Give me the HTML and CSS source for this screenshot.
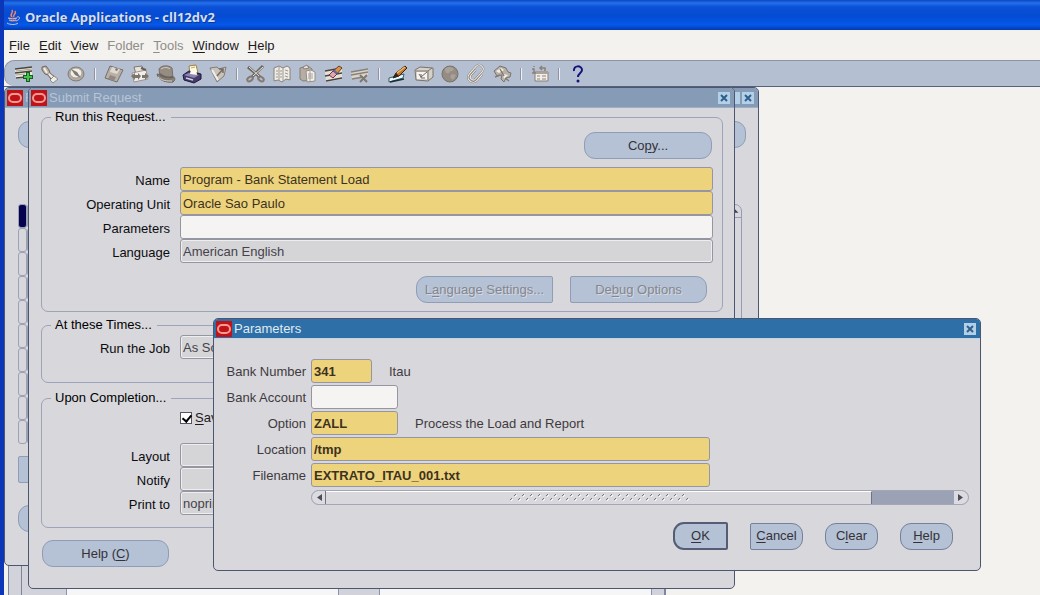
FILE: index.html
```html
<!DOCTYPE html>
<html lang="en">
<head>
  <meta charset="UTF-8">
  <title>Oracle Applications - cll12dv2</title>
  <link rel="stylesheet" href="styles.css">
</head>
<body>
  <svg class="defs" width="0" height="0" aria-hidden="true">
    <symbol id="oracle" viewBox="0 0 16 16">
      <rect width="16" height="16" fill="#c01318"/>
      <rect x="2" y="4" width="12" height="8" rx="4" fill="none" stroke="#f79a94" stroke-width="2"/>
    </symbol>
    <symbol id="close" viewBox="0 0 12 12">
      <path d="M3 3l6 6M9 3l-6 6" stroke="#2f5f8c" stroke-width="2"/>
    </symbol>
    <pattern id="ridges" width="8" height="8" patternUnits="userSpaceOnUse">
      <path d="M5 2l2-2M1 6l2-2" stroke="#74757e"/>
      <path d="M6 3l2-2M2 7l2-2" stroke="#fff"/>
    </pattern>
  </svg>

  <header class="titlebar">
    <svg class="java" width="15" height="16" viewBox="0 0 15 16" fill="none">
      <path d="M6 8C3 5 8 4 6 1M8 8c-2-2 3-3 1-6" stroke="#f0866e" stroke-width="1.5"/>
      <path d="M2 8h9l-1 5H4z" fill="#5a5a9c"/>
      <path d="M2 9c2 1 7 1 9 0M3 11c2 1 5 1 7 0M1 14c3 2 9 2 11 0" stroke="#c6c1da"/>
      <path d="M11 8c4-1 3 3-1 4" stroke="#c6c1da"/>
    </svg>
    <h1>Oracle Applications - cll12dv2</h1>
  </header>

  <nav class="menubar">
    <button><u>F</u>ile</button>
    <button><u>E</u>dit</button>
    <button><u>V</u>iew</button>
    <button disabled>Fo<u>l</u>der</button>
    <button disabled><u>T</u>ools</button>
    <button><u>W</u>indow</button>
    <button><u>H</u>elp</button>
  </nav>

  <div class="toolbar">
    <button aria-label="New"><svg viewBox="0 0 20 18"><path d="M1 4l17-2v10L2 14z" fill="#e9e7df"/><path d="M1 4l17-2M1 8l17-2M2 13l10-1" stroke="#4b463e" stroke-width="1.5"/><path d="M2 6l16-2M2 10l9-1" stroke="#aaa493"/><path d="M14 7v10M9 12h10" stroke="#145f20" stroke-width="4"/><path d="M14 8v8M10 12h8" stroke="#48bf4e" stroke-width="2"/></svg></button>
    <button aria-label="Find"><svg viewBox="0 0 20 18"><path d="M2 2l4-1 3 4 1 3 6 5-3 4-5-7-3-1-3-4z" fill="#b8b0a6" stroke="#6f675f"/><path d="M4 3l3 5M9 9l5 5" stroke="#efece4" stroke-width="2"/><path d="M14 11l4 3-5 4-3-3z" fill="#eeece6" stroke="#938b82"/></svg></button>
    <button aria-label="Show Navigator"><svg viewBox="0 0 20 18"><ellipse cx="10" cy="9" rx="8" ry="7" fill="#b3aca3" stroke="#827b73"/><ellipse cx="10" cy="8" rx="6" ry="5" fill="#f0eee8" stroke="#a39c94"/><path d="M5 4l6 3 4 6-6-3z" fill="#827a71"/></svg></button>
    <i class="sep"></i>
    <button aria-label="Save"><svg viewBox="0 0 20 18"><path d="M6 1l13 4-6 12L1 13z" fill="#b8b0a6" stroke="#756e67"/><path d="M8 2l8 2-3 5-7-2z" fill="#dedad2"/><path d="M6 10l6 2-2 4-6-2z" fill="#918981"/><path d="M12 3l2 1-1 2-2-1z" fill="#79716a"/></svg></button>
    <button aria-label="Next Step"><svg viewBox="0 0 20 18"><path d="M4 2l8-1 2 6-8 2z" fill="#e7e3db" stroke="#80786f"/><path d="M2 8l14-3 2 9-14 3z" fill="#f0eee9" stroke="#9a928a"/><path d="M1 11l4-3v2h3V8l3 3-3 4v-2H5v2z" fill="#7d756c"/><path d="M19 11l-4-3v2h-3v3h3v2z" fill="#7d756c"/><path d="M11 3l5 2" stroke="#676059" stroke-width="2"/></svg></button>
    <button aria-label="Switch Responsibility"><svg viewBox="0 0 20 18"><path d="M1 9c1 6 9 9 16 8 3-2 2-6-1-5z" fill="#8d847a" stroke="#6b635b"/><path d="M4 11L3 4c2-4 10-4 13-1l1 10c-5 3-9 1-13-2z" fill="#958c82" stroke="#786f66"/><path d="M4 9c4 4 8 4 13 3" stroke="#6b635b" stroke-width="2" fill="none"/><path d="M5 4c3-2 7-2 9 0M2 12c4 4 9 4 14 4" stroke="#d5cfc6" fill="none"/></svg></button>
    <button aria-label="Print"><svg viewBox="0 0 20 18"><path d="M7 1l7-1 2 8-8 1z" fill="#fffbe8" stroke="#9b8244"/><path d="M9 3l4-1M10 5l4-1" stroke="#c9a23f"/><path d="M1 10l6-4 12 3v5l-7 4L2 15z" fill="#453c6b" stroke="#1e1a36"/><path d="M2 10l5-2 10 2-5 3z" fill="#8b84b4"/><path d="M8 9l1-5 5-1 1 7z" fill="#fffbe8"/><path d="M4 13l7 2" stroke="#d3d0e8" stroke-width="1.5"/></svg></button>
    <button aria-label="Close Form"><svg viewBox="0 0 20 18"><path d="M2 3l7-1 2 2 7-2-2 9-7 6z" fill="#c9c3ba" stroke="#857d74"/><path d="M4 5l6 10" stroke="#f2f0eb" stroke-width="2"/><path d="M9 11l6-7M11 4h4v4" fill="none" stroke="#746c64" stroke-width="1.5"/></svg></button>
    <i class="sep"></i>
    <button aria-label="Cut"><svg viewBox="0 0 20 18"><path d="M2 2l12 10M17 1L6 12" stroke="#6c655e" stroke-width="3"/><path d="M3 2l10 9M17 2L7 11" stroke="#eae7e0"/><ellipse cx="4" cy="14" rx="3" ry="2" transform="rotate(-35 4 14)" fill="none" stroke="#837b72" stroke-width="2"/><ellipse cx="15" cy="14" rx="3" ry="2" transform="rotate(35 15 14)" fill="none" stroke="#837b72" stroke-width="2"/></svg></button>
    <button aria-label="Copy"><svg viewBox="0 0 20 18"><path d="M2 3l5-2 4 2 4-2 3 2v12l-4-1-4 3-4-2-4 1z" fill="#efede7" stroke="#8a8279"/><path d="M7 2v13M11 3v13M4 6h2M4 9h2M4 12h2M8 6h2M8 9h2M8 12h2M13 5l3 1M13 8l3 1M13 11l3 1" stroke="#9f978e"/></svg></button>
    <button aria-label="Paste"><svg viewBox="0 0 20 18"><path d="M2 3l8-2 4 3v11l-9 1-3-2z" fill="#b6aea4" stroke="#857c73"/><path d="M5 2l4-2 2 3-5 1z" fill="#e8e4dd" stroke="#898178"/><path d="M8 6l5-1 4 2v9l-8 1z" fill="#f3f1ed" stroke="#958d84"/><path d="M10 9h5M10 11h5M10 13h5M12 6v10" stroke="#aaa299"/></svg></button>
    <button aria-label="Clear Record"><svg viewBox="0 0 20 18"><path d="M1 6l17-3v11L2 17z" fill="#e5e2d9"/><path d="M1 6l17-3M1 11l17-3M2 16l16-3" stroke="#4a443d" stroke-width="1.5"/><path d="M8 7l7-6 3 2-6 7z" fill="#df9340" stroke="#643d26"/><path d="M5 10l4-4 4 3-4 4z" fill="#e8a3b1" stroke="#733242"/><path d="M9 6l2-1 3 3-2 1z" fill="#5a6ab0"/></svg></button>
    <button aria-label="Delete Record"><svg viewBox="0 0 20 18"><path d="M1 7l17-3v7L2 14z" fill="#d9d5cd"/><path d="M1 7l17-3M1 10l17-3M2 14l11-2" stroke="#8a8279" stroke-width="1.5"/><path d="M10 10l7 7M17 10l-7 7" stroke="#80776f" stroke-width="2"/></svg></button>
    <i class="sep"></i>
    <button aria-label="Edit Field"><svg viewBox="0 0 20 18"><path d="M1 13l15-4-1 4-14 4z" fill="#e8fafc" stroke="#325e69"/><path d="M2 17l14-3" stroke="#1d2b34" stroke-width="1.5"/><path d="M5 13l3-5 9-7 2 2-8 8z" fill="#c97626" stroke="#35241c"/><path d="M9 8l8-6" stroke="#f0bf62" stroke-width="1.5"/><path d="M5 13l3-5 3 3z" fill="#30241e"/></svg></button>
    <button aria-label="Zoom"><svg viewBox="0 0 20 18"><path d="M1 5l5-3 13 1v9l-5 4-12-1z" fill="#d6d1c9" stroke="#7a726a"/><path d="M2 6h12l4-3M14 6v9" stroke="#7a726a" fill="none"/><path d="M3 7h10v7H3z" fill="#f6f4f0"/><path d="M5 9l2 3 6-5M7 9v4h4" stroke="#6f675f" fill="none"/></svg></button>
    <button aria-label="Translations"><svg viewBox="0 0 20 18"><circle cx="10" cy="9" r="8" fill="#958d84" stroke="#7a7269"/><path d="M5 4c3-3 7-2 9 0-1 3-4 1-5 4-3 1-4-1-4-4zM12 9l4 1-3 5-3-3z" fill="#aaa298"/></svg></button>
    <button aria-label="Attachments"><svg viewBox="0 0 20 18" fill="none"><g transform="rotate(42 10 9)"><path d="M7 6v7c0 4 6 4 6 0V3c0-5-8-5-8 0v10c0 7 10 7 10 0V5" stroke="#857d74" stroke-width="2"/><path d="M7 6v7c0 4 6 4 6 0V3c0-5-8-5-8 0v10c0 7 10 7 10 0V5" stroke="#f2f0eb"/></g></svg></button>
    <button aria-label="Folder Tools"><svg viewBox="0 0 20 18"><path d="M2 6l6-5 6 2 2 4 3 1-1 4-4 1-2 4-3-3 1-4-5 1z" fill="#b8b0a6" stroke="#7c746b"/><path d="M4 6l5-3 3 2-5 3zM11 9l5 1-4 4z" fill="#f1eee8"/><path d="M8 4l4 7M3 12l5-2M13 13l4 3" stroke="#857d74" stroke-width="1.5"/></svg></button>
    <i class="sep"></i>
    <button aria-label="Window Help"><svg viewBox="0 0 20 18"><path d="M5 7h13v9H5z" fill="#f2efe8" stroke="#887f76"/><path d="M5 8h13" stroke="#aaa298" stroke-width="2"/><path d="M7 11h3M7 14h3M12 11h4M12 14h4" stroke="#8a8178"/><path d="M4 1v1M2 4h2v4M2 8h4M15 6V3h-5M12 1l-2 2 2 2" fill="none" stroke="#8a8178" stroke-width="1.5"/></svg></button>
    <i class="sep"></i>
    <button aria-label="Help"><svg viewBox="0 0 20 18"><path d="M6 6C5 0 14 0 14 5c0 3-4 3-4 7" fill="none" stroke="#17127a" stroke-width="2"/><circle cx="10" cy="16" r="1.5" fill="#17127a"/></svg></button>
  </div>

  <main class="desktop">
    <div class="navigator">
      <div class="gutter"></div>
      <div class="pane"></div>
      <div class="pane"></div>
      <div class="gutter"></div>
    </div>

    <section class="window requests">
      <div class="window-title">
        <svg class="logo"><use href="#oracle"/></svg>
        <h2>Requests</h2>
        <button class="close" aria-label="Restore"></button>
        <button class="close" aria-label="Close"><svg><use href="#close"/></svg></button>
      </div>
      <div class="requests-body">
        <button class="btn wide" aria-label="Refresh Data"></button>
        <div class="records">
          <div class="rows">
            <div class="row current"><i></i><b></b></div>
            <div class="row"><i></i><b></b></div>
            <div class="row"><i></i><b></b></div>
            <div class="row"><i></i><b></b></div>
            <div class="row"><i></i><b></b></div>
            <div class="row"><i></i><b></b></div>
            <div class="row"><i></i><b></b></div>
            <div class="row"><i></i><b></b></div>
            <div class="row"><i></i><b></b></div>
            <div class="row"><i></i><b></b></div>
          </div>
          <div class="vscroll"><svg viewBox="0 0 14 14"><path d="M3 9l4-4 4 4z" fill="#3b4050"/></svg></div>
        </div>
        <button class="btn square-left" aria-label="Hold Request"></button>
        <button class="btn" aria-label="Cancel Request"></button>
      </div>
    </section>

    <section class="window submit">
      <div class="window-title">
        <svg class="logo"><use href="#oracle"/></svg>
        <h2>Submit Request</h2>
        <button class="close" aria-label="Close"><svg><use href="#close"/></svg></button>
      </div>
      <form class="submit-form">
        <fieldset class="run">
          <legend>Run this Request...</legend>
          <div class="buttons copy"><button type="button" class="btn">Co<u>p</u>y...</button></div>
          <div class="fields">
            <label for="name">Name</label>
            <input id="name" class="required" value="Program - Bank Statement Load">
            <label for="unit">Operating Unit</label>
            <input id="unit" class="required" value="Oracle Sao Paulo">
            <label for="params">Parameters</label>
            <input id="params">
            <label for="language">Language</label>
            <input id="language" class="locked" value="American English" readonly>
          </div>
          <div class="buttons settings">
            <button type="button" class="btn square-right" disabled>L<u>a</u>nguage Settings...</button>
            <button type="button" class="btn square-left" disabled>De<u>b</u>ug Options</button>
          </div>
        </fieldset>

        <fieldset class="times">
          <legend>At these Times...</legend>
          <div class="fields">
            <label for="job">Run the Job</label>
            <input id="job" class="locked" value="As Soon as Possible" readonly>
          </div>
        </fieldset>

        <fieldset class="completion">
          <legend>Upon Completion...</legend>
          <div class="save">
            <input type="checkbox" id="save" checked>
            <label for="save"><u>S</u>ave all Output Files</label>
          </div>
          <div class="fields">
            <label for="layout">Layout</label>
            <input id="layout" class="locked" readonly>
            <label for="notify">Notify</label>
            <input id="notify" class="locked" readonly>
            <label for="print">Print to</label>
            <input id="print" class="locked" value="noprint" readonly>
          </div>
        </fieldset>

        <button type="button" class="btn help">Help (<u>C</u>)</button>
      </form>
    </section>

    <section class="window active parameters">
      <div class="window-title">
        <svg class="logo"><use href="#oracle"/></svg>
        <h2>Parameters</h2>
        <button class="close" aria-label="Close"><svg><use href="#close"/></svg></button>
      </div>
      <form class="params-form">
        <div class="param">
          <label for="bank">Bank Number</label>
          <input id="bank" class="required short" value="341">
          <span>Itau</span>
        </div>
        <div class="param">
          <label for="account">Bank Account</label>
          <input id="account" class="medium">
        </div>
        <div class="param">
          <label for="option">Option</label>
          <input id="option" class="required medium" value="ZALL">
          <span>Process the Load and Report</span>
        </div>
        <div class="param">
          <label for="location">Location</label>
          <input id="location" class="required long" value="/tmp">
        </div>
        <div class="param">
          <label for="filename">Filename</label>
          <input id="filename" class="required long" value="EXTRATO_ITAU_001.txt">
        </div>
        <div class="hscroll">
          <button type="button" class="arrow left" aria-label="Scroll left"><svg viewBox="0 0 14 13"><path d="M10 3v7L5 6.5z" fill="#4d4d58"/></svg></button>
          <div class="thumb"><svg class="grip"><rect width="180" height="8" fill="url(#ridges)"/></svg></div>
          <div class="trough"></div>
          <button type="button" class="arrow" aria-label="Scroll right"><svg viewBox="0 0 14 13"><path d="M4 3v7l5-3.5z" fill="#4d4d58"/></svg></button>
        </div>
        <div class="actions">
          <button type="button" class="btn square-right default"><u>O</u>K</button>
          <button type="button" class="btn square-left"><u>C</u>ancel</button>
          <button type="button" class="btn">C<u>l</u>ear</button>
          <button type="button" class="btn"><u>H</u>elp</button>
        </div>
      </form>
    </section>
  </main>
</body>
</html>
```

FILE: styles.css
```css
* {
  box-sizing: border-box;
}

body {
  margin: 0;
  height: 100vh;
  display: flex;
  flex-direction: column;
  overflow: hidden;
  border-left: 4px solid #0c36b8;
  background: #f3f2ef;
  font-family: "Liberation Sans", Arial, sans-serif;
  font-size: 13px;
  line-height: 16px;
  color: #1c1a1c;
}

button,
input {
  font: inherit;
  color: inherit;
}

button {
  padding: 0;
  border: 0;
  background: none;
}

h1,
h2 {
  margin: 0;
}

u {
  text-decoration-thickness: 1px;
  text-underline-offset: 2px;
}

.defs {
  position: absolute;
}

.titlebar {
  display: flex;
  align-items: center;
  gap: 4px;
  height: 30px;
  flex: none;
  margin-left: -4px;
  padding: 4px 0 0 6px;
  background: linear-gradient(#0a47c0 0, #2470ea 3px, #0a50d8 7px, #044cd2 16px, #0558ea 25px, #0339b0 30px);
}

.titlebar h1 {
  font: bold 13px/18px "Open Sans", sans-serif;
  color: #d3dff5;
  text-shadow: 1px 1px 0 #123a8c;
}

.menubar {
  display: flex;
  gap: 9px;
  height: 30px;
  flex: none;
  padding: 2px 5px 0;
}

.menubar button:disabled {
  color: #908c88;
}

.toolbar {
  display: flex;
  align-items: center;
  gap: 6px;
  height: 26px;
  flex: none;
  padding-left: 9px;
  border: solid #8d93a3;
  border-width: 1px 0 0 1px;
  border-radius: 10px 0 0 10px;
  background: #b5bfd2;
}

.toolbar button,
.toolbar svg {
  display: block;
  width: 20px;
  height: 18px;
}

.toolbar svg {
  overflow: visible;
}

.sep {
  width: 6px;
  height: 12px;
  background: linear-gradient(90deg, transparent 2px, #8e94a4 2px, #8e94a4 3px, #f0f1f4 3px, #f0f1f4 4px, transparent 4px);
}

.desktop {
  position: relative;
  flex: 1;
  overflow: hidden;
  border-top: 1px solid #566079;
}

/* windows */

.window {
  position: absolute;
  border: 1px solid #4d5670;
  border-radius: 5px;
  background: #d7d7dc;
  overflow: hidden;
}

.window-title {
  display: flex;
  align-items: center;
  gap: 2px;
  height: 20px;
  padding: 0 4px 0 2px;
  background: #869bb6;
  border-bottom: 1px solid #9fb0c6;
  color: #b7c5d6;
}

.window-title h2 {
  flex: 1;
  font-size: 13px;
  font-weight: normal;
}

.active .window-title {
  background: #2f6fa8;
  border-bottom-color: #c3d2e4;
  color: #dfeaf2;
}

.logo {
  width: 16px;
  height: 16px;
}

.close,
.close svg {
  display: block;
  width: 12px;
  height: 12px;
}

.close {
  background: #b4d0e6;
}

.navigator {
  position: absolute;
  left: 4px;
  top: 300px;
  width: 658px;
  height: 400px;
  display: flex;
  border: 1px solid #7d869c;
  background: #d2d3da;
}

.gutter {
  width: 13px;
  border-right: 1px solid #7d869c;
}

.pane {
  flex: 1;
  margin-left: 40px;
  border: 1px solid #8a93a7;
  background: #f6f6f6;
}

.gutter + .pane {
  margin-left: 44px;
}

.requests {
  left: 0;
  top: 0;
  width: 755px;
}

.submit {
  left: 24px;
  top: 0;
  width: 707px;
}

.parameters {
  left: 209px;
  top: 231px;
  width: 768px;
}

/* controls */

.btn {
  height: 27px;
  border: 1px solid #8f9db7;
  border-radius: 11px;
  background: #b5c1d4;
  color: #343238;
}

.btn:disabled {
  color: #85868d;
  text-shadow: 1px 1px 0 #d3dae5;
}

.square-left {
  border-top-left-radius: 2px;
  border-bottom-left-radius: 2px;
}

.square-right {
  border-top-right-radius: 2px;
  border-bottom-right-radius: 2px;
}

.window input:not([type="checkbox"]) {
  height: 24px;
  min-width: 0;
  padding: 0 2px;
  border: 1px solid #9696a3;
  border-radius: 3px;
  background: #f5f4f2;
  color: #3d3220;
}

.window input.required {
  background: #edd37c;
}

.submit input.locked {
  background: #d5d5d8;
  box-shadow: inset 0 0 0 1px #eeeef0;
  color: #45424a;
}

/* request list */

.requests-body {
  display: flex;
  flex-direction: column;
  padding: 13px 12px 33px 13px;
}

.requests-body .btn {
  width: 120px;
  margin-bottom: 22px;
}

.requests-body .wide {
  width: 100%;
  margin-bottom: 56px;
}

.requests-body .btn:last-child {
  margin-bottom: 0;
}

.records {
  display: flex;
  margin: 0 4px 12px 0;
}

.rows {
  flex: 1;
}

.row {
  display: flex;
  height: 24px;
}

.row i,
.row b {
  border: 1px solid #9aa2b6;
  border-radius: 3px;
}

.row i {
  width: 9px;
}

.row b {
  flex: 1;
}

.row.current i {
  background: #05024f;
}

.vscroll {
  width: 14px;
  border: 1px solid #949db3;
  border-radius: 7px;
}

.vscroll svg {
  display: block;
  border-bottom: 1px solid #949db3;
}

/* submit request */

.submit-form {
  display: flex;
  flex-direction: column;
  gap: 5px;
  padding: 1px 11px 21px 12px;
}

fieldset {
  min-width: 0;
  margin: 0;
  padding: 4px 9px 12px 0;
  border: 1px solid #9ba4b9;
  border-radius: 7px;
}

legend {
  margin-left: 9px;
  padding: 0 5px 0 4px;
  color: #000;
}

.fields {
  display: grid;
  grid-template-columns: 128px 1fr;
  column-gap: 10px;
}

.fields label {
  padding-top: 6px;
  text-align: right;
  color: #0c0c0e;
}

.buttons {
  display: flex;
  justify-content: flex-end;
}

.copy {
  padding: 3px 1px 8px 0;
}

.copy .btn {
  width: 128px;
}

.settings {
  gap: 17px;
  padding: 13px 6px 0 0;
}

.settings .btn {
  width: 137px;
}

.run {
  padding-bottom: 8px;
}

.times {
  padding-top: 2px;
  padding-bottom: 23px;
}

.completion {
  margin-top: 2px;
  padding-top: 1px;
}

.save {
  display: flex;
  align-items: center;
  gap: 4px;
  height: 36px;
  padding: 0 0 14px 139px;
}

.save input {
  appearance: none;
  width: 10px;
  height: 10px;
  margin: 0;
  background: #fff;
  outline: 1px solid #55555f;
}

.save input:checked::before {
  content: "";
  display: block;
  width: 4px;
  height: 7px;
  margin: 0 0 0 3px;
  border: solid #000;
  border-width: 0 2px 2px 0;
  transform: rotate(40deg);
}

.help {
  width: 127px;
  margin: 7px 0 0 1px;
}

/* parameters */

.params-form {
  display: flex;
  flex-direction: column;
  gap: 2px;
  padding: 20px 11px 20px 0;
  color: #3f3a3c;
}

.param {
  display: flex;
  align-items: center;
}

.param label,
.param span {
  padding-top: 2px;
}

.param label {
  width: 92px;
  margin-right: 5px;
  text-align: right;
}

.param input {
  border-top-width: 2px;
  font-weight: bold;
}

.param span {
  margin-left: 17px;
}

.short {
  width: 61px;
}

.medium {
  width: 87px;
}

.long {
  width: 399px;
}

.hscroll {
  display: flex;
  height: 15px;
  margin: 1px 0 0 97px;
  border: 1px solid #a3a6b4;
  border-radius: 8px;
  background: #9ca2b6;
  overflow: hidden;
}

.arrow {
  width: 14px;
  background: #dcdce0;
}

.arrow svg {
  display: block;
  width: 14px;
  height: 13px;
}

.arrow.left {
  border-right: 1px solid #6f7484;
}

.thumb {
  display: flex;
  align-items: center;
  justify-content: center;
  flex: 20;
  border-top: 1px solid #fff;
  border-right: 1px solid #6f7484;
  background: #d9d9dd;
}

.trough {
  flex: 3;
}

.grip {
  width: 180px;
  height: 8px;
}

.actions {
  display: flex;
  align-items: center;
  justify-content: flex-end;
  gap: 22px;
  margin-top: 15px;
  padding-right: 16px;
}

.actions .btn {
  width: 53px;
  border-color: #75809a;
}

.actions .default {
  width: 55px;
  height: 28px;
  border: 2px solid #555d74;
}
```
